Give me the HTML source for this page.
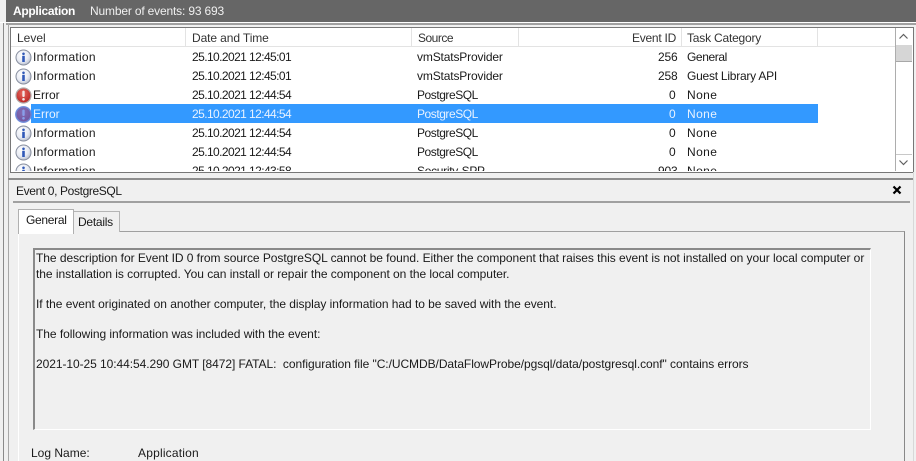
<!DOCTYPE html>
<html><head><meta charset="utf-8"><style>
html,body{margin:0;padding:0;background:#f0f0f0}
#p{position:relative;width:916px;height:461px;overflow:hidden;background:#f0f0f0;font-family:"Liberation Sans",sans-serif;font-size:12px;color:#1a1a1a}
#p div{position:absolute}
.t{white-space:nowrap;line-height:14px;height:14px}
.h{color:#333}
.sel{color:#e8f2ff}
.d{letter-spacing:-.58px}
.i{letter-spacing:.25px}
.v{letter-spacing:-.15px}
.g{letter-spacing:-.45px}
.n{letter-spacing:.4px}
.b{letter-spacing:-.045px}
svg{position:absolute;left:15px;width:17px;height:17px}
</style></head><body><div id="p">
<svg width="0" height="0" style="width:0;height:0"><defs>
<radialGradient id="bi" cx=".4" cy=".35" r=".7"><stop offset="0" stop-color="#fff"/><stop offset=".6" stop-color="#e8ebf3"/><stop offset="1" stop-color="#b4bbcb"/></radialGradient>
<radialGradient id="re" cx=".45" cy=".35" r=".7"><stop offset="0" stop-color="#e8685e"/><stop offset="1" stop-color="#b52020"/></radialGradient>
<symbol id="info" viewBox="0 0 17 17"><circle cx="8.500" cy="8.500" r="7.500" fill="url(#bi)" stroke="#858c9c"/><circle cx="8.500" cy="4.800" r="1.300" fill="#3059b8"/><rect x="7.200" y="6.800" width="2.600" height="6.200" fill="#3059b8"/></symbol>
<symbol id="err" viewBox="0 0 17 17"><circle cx="8.500" cy="8.500" r="7.500" fill="url(#re)" stroke="#b0a8a8" stroke-width="1.200"/><rect x="7.300" y="3.600" width="2.400" height="6.400" rx="1" fill="#f4e6e6"/><circle cx="8.500" cy="12.300" r="1.300" fill="#f4e6e6"/></symbol>
</defs></svg>

<!-- top bar -->
<div style="left:6px;top:0;width:910px;height:22px;background:#666"></div>
<div style="left:0;top:22px;width:916px;height:1px;background:#fff"></div>
<div style="left:6px;top:23px;width:910px;height:2px;background:#a0a0a0"></div>
<div class="t" style="left:13px;top:4px;color:#fff;font-weight:bold;letter-spacing:-.3px">Application</div>
<div class="t" style="left:90px;top:4px;color:#f0f0f0;letter-spacing:-.17px">Number of events: 93 693</div>

<!-- outer frame lines -->
<div style="left:3px;top:23px;width:1px;height:438px;background:#8a8a8a"></div>
<div style="left:8px;top:23px;width:1px;height:438px;background:#a8a8a8"></div>

<!-- list -->
<div style="left:10px;top:27px;width:902px;height:144px;background:#fff;border:1px solid #777"></div>
<div style="left:11px;top:28px;width:885px;height:18px;background:#fff;border-bottom:1px solid #e3e3e3"></div>
<div style="left:185px;top:28px;width:1px;height:18px;background:#e3e3e3"></div>
<div style="left:411px;top:28px;width:1px;height:18px;background:#e3e3e3"></div>
<div style="left:518px;top:28px;width:1px;height:18px;background:#e3e3e3"></div>
<div style="left:681px;top:28px;width:1px;height:18px;background:#e3e3e3"></div>
<div style="left:817px;top:28px;width:1px;height:18px;background:#e3e3e3"></div>
<div class="t h" style="left:17px;top:31px">Level</div>
<div class="t h" style="left:192px;top:31px;letter-spacing:-.1px">Date and Time</div>
<div class="t h" style="left:418px;top:31px;letter-spacing:-.5px">Source</div>
<div class="t h" style="left:632px;top:31px;letter-spacing:-.25px">Event ID</div>
<div class="t h" style="left:687px;top:31px;letter-spacing:-.2px">Task Category</div>

<!-- selected -->
<div style="left:31px;top:104px;width:787px;height:19px;background:#3399ff"></div>

<!-- rows -->
<svg style="top:48.500px"><use href="#info"/></svg>
<svg style="top:67.500px"><use href="#info"/></svg>
<svg style="top:86.500px"><use href="#err"/></svg>
<svg style="top:105.500px"><use href="#err"/></svg>
<div style="left:15px;top:105.500px;width:17px;height:17px;background:rgba(70,115,235,.62);border-radius:50%"></div>
<svg style="top:124.500px"><use href="#info"/></svg>
<svg style="top:143.500px"><use href="#info"/></svg>
<div class="t i" style="left:33px;top:50px">Information</div>
<div class="t d" style="left:192px;top:50px">25.10.2021 12:45:01</div>
<div class="t v" style="left:417px;top:50px">vmStatsProvider</div>
<div class="t d" style="left:658px;top:50px;letter-spacing:-.2px">256</div>
<div class="t" style="left:687px;top:50px;letter-spacing:-.4px">General</div>
<div class="t i" style="left:33px;top:69px">Information</div>
<div class="t d" style="left:192px;top:69px">25.10.2021 12:45:01</div>
<div class="t v" style="left:417px;top:69px">vmStatsProvider</div>
<div class="t d" style="left:658px;top:69px;letter-spacing:-.2px">258</div>
<div class="t" style="left:687px;top:69px;letter-spacing:-.24px">Guest Library API</div>
<div class="t" style="left:33px;top:88px">Error</div>
<div class="t d" style="left:192px;top:88px">25.10.2021 12:44:54</div>
<div class="t g" style="left:417px;top:88px">PostgreSQL</div>
<div class="t" style="left:669px;top:88px">0</div>
<div class="t n" style="left:687px;top:88px">None</div>
<div class="t sel" style="left:33px;top:107px">Error</div>
<div class="t sel d" style="left:192px;top:107px">25.10.2021 12:44:54</div>
<div class="t sel g" style="left:417px;top:107px">PostgreSQL</div>
<div class="t sel" style="left:669px;top:107px">0</div>
<div class="t sel n" style="left:687px;top:107px">None</div>
<div class="t i" style="left:33px;top:126px">Information</div>
<div class="t d" style="left:192px;top:126px">25.10.2021 12:44:54</div>
<div class="t g" style="left:417px;top:126px">PostgreSQL</div>
<div class="t" style="left:669px;top:126px">0</div>
<div class="t n" style="left:687px;top:126px">None</div>
<div class="t i" style="left:33px;top:145px">Information</div>
<div class="t d" style="left:192px;top:145px">25.10.2021 12:44:54</div>
<div class="t g" style="left:417px;top:145px">PostgreSQL</div>
<div class="t" style="left:669px;top:145px">0</div>
<div class="t n" style="left:687px;top:145px">None</div>
<div style="left:11px;top:162px;width:884px;height:9px;overflow:hidden">
<svg style="left:4px;top:.500px"><use href="#info"/></svg>
<div class="t i" style="left:22px;top:2px">Information</div>
<div class="t d" style="left:181px;top:2px">25.10.2021 12:43:58</div>
<div class="t" style="left:406px;top:2px;letter-spacing:-.3px">Security-SPP</div>
<div class="t d" style="left:647px;top:2px;letter-spacing:-.2px">903</div>
<div class="t n" style="left:676px;top:2px">None</div>
</div>

<!-- scrollbar -->
<div style="left:895px;top:28px;width:1px;height:143px;background:#adadad"></div>
<div style="left:896px;top:28px;width:16px;height:143px;background:#fff"></div>
<div style="left:896px;top:45px;width:16px;height:17px;background:#d6d6d6;border-bottom:1px solid #a8a8a8;box-sizing:border-box"></div>
<div style="left:896px;top:154px;width:16px;height:1px;background:#c8c8c8"></div>
<svg style="left:895px;top:28px;width:17px;height:17px" viewBox="0 0 17 17"><path d="M4.500 10.500 L8.500 6.500 L12.500 10.500" fill="none" stroke="#606060" stroke-width="1.200"/></svg>
<svg style="left:895px;top:154px;width:17px;height:17px" viewBox="0 0 17 17"><path d="M4.500 6.500 L8.500 10.500 L12.500 6.500" fill="none" stroke="#606060" stroke-width="1.200"/></svg>

<!-- details pane -->
<div style="left:8px;top:178px;width:906px;height:2px;background:#8c8c8c"></div>
<div class="t" style="left:16px;top:184px;letter-spacing:-.37px">Event 0, PostgreSQL</div>
<svg style="left:891px;top:184px;width:12px;height:12px" viewBox="0 0 12 12"><path d="M2.500 2.500 L9.500 9.500 M9.500 2.500 L2.500 9.500" stroke="#000" stroke-width="2.200" fill="none"/></svg>
<div style="left:13px;top:201px;width:897px;height:2px;background:#a0a0a0"></div>

<!-- tabs -->
<div style="left:18px;top:231px;width:887px;height:230px;box-sizing:border-box;background:#f0f0f0;border-left:1px solid #fff;border-right:1px solid #888;border-top:1px solid #a0a0a0"></div>
<div style="left:73px;top:211px;width:46px;height:20px;background:#f0f0f0;border:1px solid #b5b5b5;border-bottom:0;border-left:0"></div>
<div style="left:18px;top:209px;width:54px;height:24px;background:#fff;border:1px solid #b0b0b0;border-bottom:0"></div>
<div class="t" style="left:26px;top:213px;letter-spacing:-.3px">General</div>
<div class="t" style="left:78px;top:215px;letter-spacing:-.25px">Details</div>

<!-- desc box -->
<div style="left:33px;top:248px;width:838px;height:182px;box-sizing:border-box;border-top:2px solid #8a8a8a;border-left:2px solid #8a8a8a;border-right:1px solid #fff;border-bottom:1px solid #fff"></div>
<div class="t b" style="left:36px;top:251px">The description for Event ID 0 from source PostgreSQL cannot be found. Either the component that raises this event is not installed on your local computer or</div>
<div class="t b" style="left:36px;top:267px">the installation is corrupted. You can install or repair the component on the local computer.</div>
<div class="t b" style="left:36px;top:297px">If the event originated on another computer, the display information had to be saved with the event.</div>
<div class="t b" style="left:36px;top:327px">The following information was included with the event:</div>
<div class="t" style="left:36px;top:357px;letter-spacing:-.06px">2021-10-25 10:44:54.290 GMT [8472] FATAL:&nbsp; configuration file "C:/UCMDB/DataFlowProbe/pgsql/data/postgresql.conf" contains errors</div>

<div class="t" style="left:31px;top:446px">Log Name:</div>
<div class="t" style="left:138px;top:446px;letter-spacing:.2px">Application</div>
<div style="left:913px;top:172px;width:1px;height:289px;background:#d8d8d8"></div>
</div></body></html>
